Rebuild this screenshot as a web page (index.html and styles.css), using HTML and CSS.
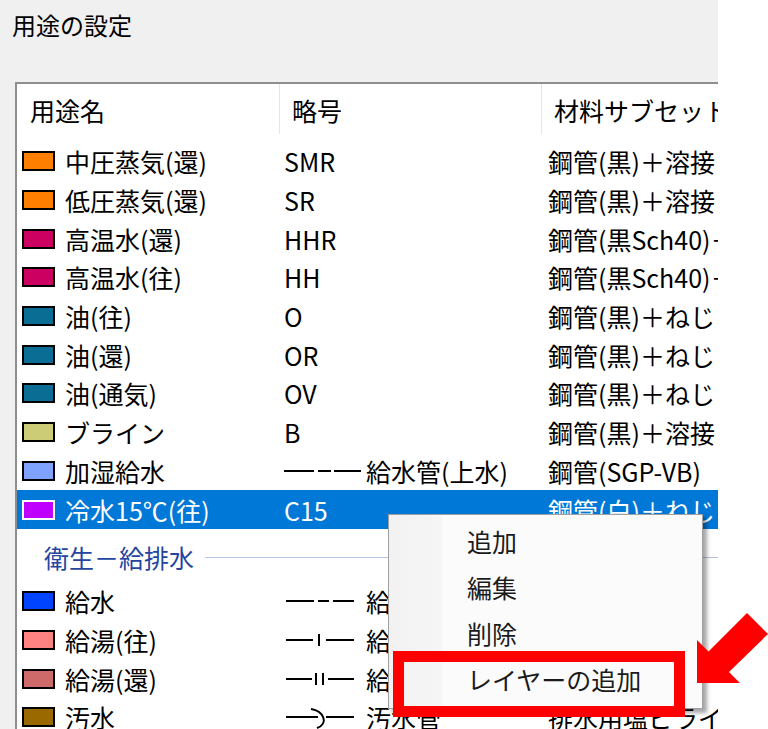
FILE: index.html
```html
<!DOCTYPE html>
<html lang="ja">
<head>
    <meta charset="UTF-8">
    <title>用途の設定</title>
    <link rel="stylesheet" href="styles.css">
</head>
<body>
    <!-- ダイアログ本体 -->
    <div class="dialog">
        <div class="dialog-title">用途の設定</div>

        <div class="list">
            <div class="list-header">
                <div class="head-cell head-name">用途名</div>
                <div class="head-cell">略号</div>
                <div class="head-cell">材料サブセット</div>
            </div>

            <div class="row">
                <div class="cell cell-name"><span class="swatch" style="background:#ff8000"></span>中圧蒸気(還)</div>
                <div class="cell cell-code">SMR</div>
                <div class="cell cell-mat">鋼管(黒)＋溶接</div>
            </div>
            <div class="row">
                <div class="cell cell-name"><span class="swatch" style="background:#ff8000"></span>低圧蒸気(還)</div>
                <div class="cell cell-code">SR</div>
                <div class="cell cell-mat">鋼管(黒)＋溶接</div>
            </div>
            <div class="row">
                <div class="cell cell-name"><span class="swatch" style="background:#cc0060"></span>高温水(還)</div>
                <div class="cell cell-code">HHR</div>
                <div class="cell cell-mat">鋼管(黒Sch40)＋溶接</div>
            </div>
            <div class="row">
                <div class="cell cell-name"><span class="swatch" style="background:#cc0060"></span>高温水(往)</div>
                <div class="cell cell-code">HH</div>
                <div class="cell cell-mat">鋼管(黒Sch40)＋溶接</div>
            </div>
            <div class="row">
                <div class="cell cell-name"><span class="swatch" style="background:#0a6d94"></span>油(往)</div>
                <div class="cell cell-code">O</div>
                <div class="cell cell-mat">鋼管(黒)＋ねじ</div>
            </div>
            <div class="row">
                <div class="cell cell-name"><span class="swatch" style="background:#0a6d94"></span>油(還)</div>
                <div class="cell cell-code">OR</div>
                <div class="cell cell-mat">鋼管(黒)＋ねじ</div>
            </div>
            <div class="row">
                <div class="cell cell-name"><span class="swatch" style="background:#0a6d94"></span>油(通気)</div>
                <div class="cell cell-code">OV</div>
                <div class="cell cell-mat">鋼管(黒)＋ねじ</div>
            </div>
            <div class="row">
                <div class="cell cell-name"><span class="swatch" style="background:#cccc77"></span>ブライン</div>
                <div class="cell cell-code">B</div>
                <div class="cell cell-mat">鋼管(黒)＋溶接</div>
            </div>
            <div class="row">
                <div class="cell cell-name"><span class="swatch" style="background:#80a2ff"></span>加湿給水</div>
                <div class="cell cell-code">
                    <svg class="linetype" viewBox="0 0 80 24"><path d="M0 12H30M34 12H47M50 12H77"/></svg>給水管(上水)
                </div>
                <div class="cell cell-mat">鋼管(SGP-VB)</div>
            </div>
            <div class="row selected">
                <div class="cell cell-name"><span class="swatch" style="background:#c000ff"></span>冷水15℃(往)</div>
                <div class="cell cell-code">C15</div>
                <div class="cell cell-mat">鋼管(白)＋ねじ</div>
            </div>

            <div class="group">
                <span class="group-label">衛生－給排水</span>
                <span class="group-line"></span>
            </div>

            <div class="row">
                <div class="cell cell-name"><span class="swatch" style="background:#0044ff"></span>給水</div>
                <div class="cell cell-code">
                    <svg class="linetype" viewBox="0 0 80 24"><path d="M2 12H30M34 12H45M49 12H70"/></svg>給水管(上水)
                </div>
                <div class="cell cell-mat">鋼管(SGP-VB)</div>
            </div>
            <div class="row">
                <div class="cell cell-name"><span class="swatch" style="background:#ff8282"></span>給湯(往)</div>
                <div class="cell cell-code">
                    <svg class="linetype" viewBox="0 0 80 24"><path d="M2 12H29M35 6V18M42 12H70"/></svg>給湯管
                </div>
                <div class="cell cell-mat">銅管</div>
            </div>
            <div class="row">
                <div class="cell cell-name"><span class="swatch" style="background:#cf6a6a"></span>給湯(還)</div>
                <div class="cell cell-code">
                    <svg class="linetype" viewBox="0 0 80 24"><path d="M2 12H28M32 6V18M39 6V18M44 12H70"/></svg>給湯管
                </div>
                <div class="cell cell-mat">銅管</div>
            </div>
            <div class="row">
                <div class="cell cell-name"><span class="swatch" style="background:#9a6a00"></span>汚水</div>
                <div class="cell cell-code">
                    <svg class="linetype" viewBox="0 0 80 24"><path d="M2 12H34M42 12H70M27 4C40 6 45 19 33 23"/></svg>汚水管
                </div>
                <div class="cell cell-mat">排水用塩ビライニング鋼管</div>
            </div>
        </div>
    </div>

    <!-- 右クリックメニュー -->
    <div class="context-menu">
        <div class="menu-item">追加</div>
        <div class="menu-item">編集</div>
        <div class="menu-item">削除</div>
        <div class="menu-item">レイヤーの追加</div>
    </div>

    <!-- 注記：赤枠と矢印 -->
    <div class="mark-box"></div>
    <svg class="mark-arrow" viewBox="680 590 88 110">
        <polygon points="697,683 697,640 708.5,651.5 747,613 768,634 729,672 740,683"/>
    </svg>
</body>
</html>
```

FILE: styles.css
```css
:root {
    --dialog-bg: #f0f0f0;
    --select-bg: #0078d7;
    --row-h: 38.7px;
    --ui-font: "Noto Sans CJK JP", "Noto Sans", sans-serif;
}

body {
    margin: 0;
    width: 768px;
    height: 729px;
    overflow: hidden;
    background: #fff;
    font-family: var(--ui-font);
    color: #000;
}

.dialog {
    width: 718px;
    height: 729px;
    background: var(--dialog-bg);
    overflow: hidden;
}

.dialog-title {
    height: 82px;
    padding: 10px 0 0 12px;
    box-sizing: border-box;
    font-size: 24px;
    line-height: 30px;
}

/* 一覧 */
.list {
    margin-left: 15px;
    height: 647px;
    background: #fff;
    border-top: 2px solid #8e8e8e;
    border-left: 2px solid #8e8e8e;
    box-sizing: border-box;
    overflow: hidden;
}

.list-header {
    display: grid;
    grid-template-columns: 262px 262px 1fr;
    height: 50px;
    margin-bottom: 8px;
    font-size: 25px;
}

.head-cell {
    display: flex;
    align-items: center;
    padding: 2px 0 0 12px;
    border-left: 1px solid #e5e5e5;
    white-space: nowrap;
}

.head-name {
    border-left: none;
    padding-left: 13px;
}

.row {
    display: grid;
    grid-template-columns: 262px 262px 1fr;
    height: var(--row-h);
    font-size: 25px;
}

.cell {
    display: flex;
    align-items: center;
    white-space: nowrap;
    overflow: hidden;
}

.cell-name {
    padding-left: 5px;
}

.cell-code {
    padding-left: 5px;
}

.cell-mat {
    padding-left: 7px;
}

.swatch {
    width: 33px;
    height: 20px;
    margin-right: 10px;
    border: 2px solid #000;
    box-sizing: border-box;
    flex: none;
}

.linetype {
    width: 80px;
    height: 24px;
    margin-right: 2px;
    flex: none;
    fill: none;
    stroke: #000;
    stroke-width: 2;
}

.row.selected {
    background: var(--select-bg);
    color: #fff;
}

.row.selected .swatch {
    border-color: #fff;
}

/* グループ見出し */
.group {
    display: flex;
    align-items: center;
    height: 53px;
    padding: 4px 0 0 27px;
    box-sizing: border-box;
    font-size: 25px;
    color: #2444a0;
}

.group-line {
    flex: 1;
    height: 1px;
    margin-left: 11px;
    background: #b7c3e2;
}

/* 右クリックメニュー */
.context-menu {
    position: absolute;
    left: 388px;
    top: 514px;
    width: 315px;
    height: 195px;
    padding-top: 3px;
    box-sizing: border-box;
    border: 1px solid #a0a0a0;
    background: linear-gradient(to right, #f1f1f1 0, #f6f6f6 53px, #fbfbfb 54px);
    box-shadow: 4px 4px 4px rgba(0, 0, 0, 0.35);
    font-size: 25px;
    color: #1b1b1b;
}

.menu-item {
    height: 46px;
    line-height: 46px;
    padding-left: 78px;
    white-space: nowrap;
}

/* 注記 */
.mark-box {
    position: absolute;
    left: 393px;
    top: 651px;
    width: 292px;
    height: 66px;
    border: 11px solid #ff0000;
    box-sizing: border-box;
}

.mark-arrow {
    position: absolute;
    left: 680px;
    top: 590px;
    width: 88px;
    height: 110px;
    fill: #ff0000;
}
```
